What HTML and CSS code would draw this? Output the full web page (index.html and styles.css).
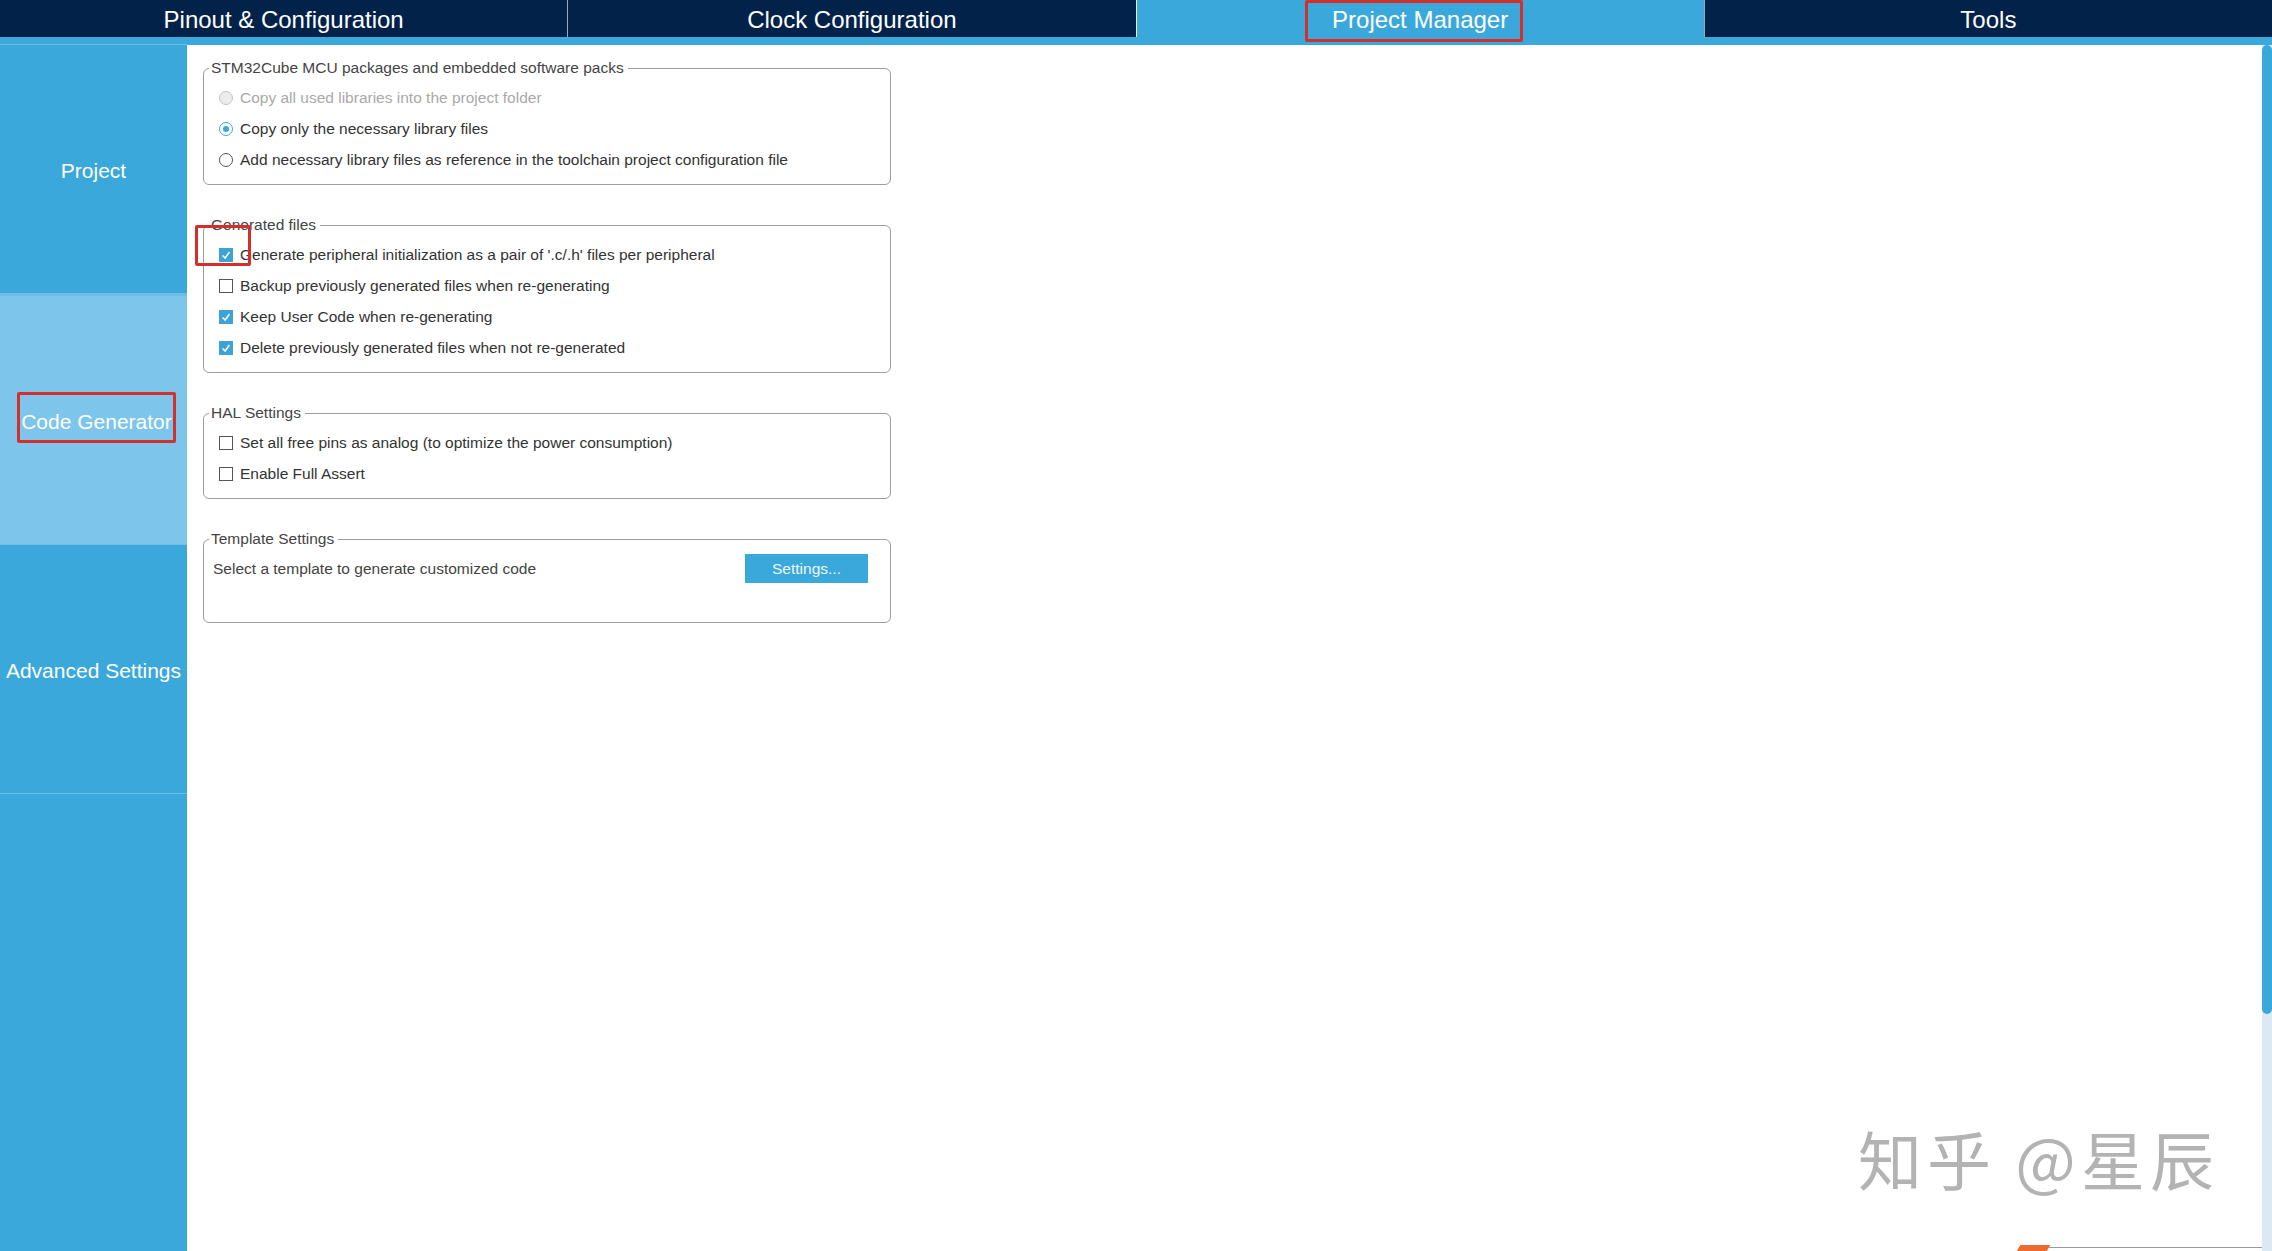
FILE: index.html
```html
<!DOCTYPE html>
<html lang="en">

<head>
    <meta charset="UTF-8">
    <meta name="viewport" content="width=device-width, initial-scale=1.0">
    <title>Project Manager</title>
    <link rel="stylesheet" href="styles.css">
</head>

<body>
    <div class="app">
        <nav class="tabs">
            <div class="tab">Pinout &amp; Configuration</div>
            <div class="tab">Clock Configuration</div>
            <div class="tab active">Project Manager<span class="mark mark-tab"></span></div>
            <div class="tab">Tools</div>
        </nav>
        <div class="strip"></div>

        <div class="workspace">
            <aside class="sidebar">
                <div class="side-item">Project</div>
                <div class="side-item selected"><span class="boxed">Code Generator</span></div>
                <div class="side-item">Advanced Settings</div>
            </aside>

            <main class="main">
                <fieldset class="group">
                    <legend>STM32Cube MCU packages and embedded software packs</legend>
                    <div class="row disabled"><span class="radio"></span>Copy all used libraries into the project folder</div>
                    <div class="row"><span class="radio on"></span>Copy only the necessary library files</div>
                    <div class="row"><span class="radio"></span>Add necessary library files as reference in the toolchain project configuration file</div>
                </fieldset>

                <fieldset class="group">
                    <legend>Generated files</legend>
                    <div class="row"><span class="check on"><svg viewBox="0 0 14 14"><polyline points="3,7.5 6,10.5 11,3.5"/></svg></span>Generate peripheral initialization as a pair of '.c/.h' files per peripheral</div>
                    <div class="row"><span class="check"></span>Backup previously generated files when re-generating</div>
                    <div class="row"><span class="check on"><svg viewBox="0 0 14 14"><polyline points="3,7.5 6,10.5 11,3.5"/></svg></span>Keep User Code when re-generating</div>
                    <div class="row"><span class="check on"><svg viewBox="0 0 14 14"><polyline points="3,7.5 6,10.5 11,3.5"/></svg></span>Delete previously generated files when not re-generated</div>
                </fieldset>

                <fieldset class="group">
                    <legend>HAL Settings</legend>
                    <div class="row"><span class="check"></span>Set all free pins as analog (to optimize the power consumption)</div>
                    <div class="row"><span class="check"></span>Enable Full Assert</div>
                </fieldset>

                <fieldset class="group template">
                    <legend>Template Settings</legend>
                    <div class="row plain">
                        <span>Select a template to generate customized code</span>
                        <button class="btn" type="button">Settings...</button>
                    </div>
                </fieldset>

                <!-- red annotation box from the screenshot -->
                <span class="mark mark-check"></span>

                <div class="watermark">知乎 @星辰</div>
                <span class="corner-orange"></span>
                <span class="corner-line"></span>
            </main>

            <div class="scroll">
                <div class="thumb"></div>
            </div>
        </div>
    </div>
</body>

</html>
```

FILE: styles.css
```css
body {
    margin: 0;
    width: 2272px;
    height: 1251px;
    overflow: hidden;
    font-family: "Liberation Sans", Arial, sans-serif;
    background: #fff;
}

.app {
    display: flex;
    flex-direction: column;
    height: 1251px;
}

/* top tabs */
.tabs {
    display: flex;
    height: 37px;
    background: #03224a;
}

.tab {
    position: relative;
    flex: 1;
    display: flex;
    justify-content: center;
    align-items: center;
    padding-top: 2px;
    box-sizing: border-box;
    color: #fff;
    font-size: 24px;
    border-left: 1px solid #9aa8b8;
}

.tab:first-child {
    border-left: none;
}

.tab.active {
    background: #3aa8db;
    border-left-color: #e6f2fa;
}

.strip {
    height: 8px;
    background: #3aa8db;
}

.workspace {
    flex: 1;
    display: flex;
}

/* left menu */
.sidebar {
    width: 187px;
    background: #3aa8db;
    display: flex;
    flex-direction: column;
}

.side-item {
    height: 249px;
    box-sizing: border-box;
    padding-top: 3px;
    border-bottom: 1px solid #6cbde7;
    display: flex;
    justify-content: center;
    align-items: center;
    color: #fff;
    font-size: 21px;
}

.side-item:first-child {
    box-shadow: 0 -1px 0 #6cbde7;
}

.side-item.selected {
    background: #7dc5ea;
    border-top: 2px solid #6cbde7;
    height: 251px;
    padding-top: 0;
}

.boxed {
    padding: 15px 1px 6px 1px;
    border: 3px solid #d3302c;
    border-radius: 2px;
    margin-left: 6px;
    margin-top: -5px;
}

/* content */
.main {
    position: relative;
    flex: 1;
    padding: 14px 0 0 16px;
}

.group {
    width: 688px;
    box-sizing: border-box;
    margin: 0 0 31px;
    padding: 5px 22px 9px 5px;
    border: 1px solid #9d9d9d;
    border-radius: 6px;
    font-size: 15.5px;
}

.group legend {
    padding: 0 4px 0 2px;
    color: #444;
}

.row {
    display: flex;
    align-items: center;
    height: 31px;
    padding-left: 10px;
    color: #333;
    white-space: nowrap;
}

.row.disabled {
    color: #a9a9a9;
}

.row.plain {
    justify-content: space-between;
    padding-left: 4px;
    color: #444;
}

.template {
    padding-bottom: 38px;
}

.radio,
.check {
    width: 14px;
    height: 14px;
    box-sizing: border-box;
    margin-right: 7px;
    flex: none;
    border: 1px solid #555;
    background: #fff;
}

.radio {
    border-radius: 50%;
    display: flex;
    justify-content: center;
    align-items: center;
}

.disabled .radio {
    border-color: #c4c4c4;
    background: #ececec;
}

.radio.on {
    border: 1.5px solid #3aa8db;
}

.radio.on::after {
    content: "";
    width: 6px;
    height: 6px;
    border-radius: 50%;
    background: #3aa8db;
}

.check.on {
    border-color: #3ba3d8;
    background: #3ba3d8;
}

.check svg {
    display: block;
    width: 12px;
    height: 12px;
    fill: none;
    stroke: #fff;
    stroke-width: 1.8;
}

.btn {
    width: 123px;
    height: 29px;
    border: none;
    background: #3aa8db;
    color: #eef7fc;
    font-family: inherit;
    font-size: 15.5px;
}

/* annotation boxes */
.mark {
    position: absolute;
    border: 3px solid #d3302c;
    border-radius: 2px;
    box-sizing: border-box;
}

.mark-tab {
    left: 168px;
    top: 0;
    width: 218px;
    height: 42px;
}

.mark-check {
    left: 8px;
    top: 180px;
    width: 56px;
    height: 41px;
}

.watermark {
    position: absolute;
    left: 1671px;
    top: 1080px;
    font-family: "Noto Sans CJK SC", sans-serif;
    font-size: 64px;
    line-height: 1;
    letter-spacing: 5px;
    color: #b3b3b3;
    white-space: nowrap;
}

.corner-orange {
    position: absolute;
    left: 1831px;
    top: 1200px;
    width: 30px;
    height: 8px;
    background: #ee6a2e;
    transform: skewX(-30deg);
}

.corner-line {
    position: absolute;
    left: 1861px;
    top: 1202px;
    width: 214px;
    height: 1px;
    background: #9a9a9a;
}

/* scrollbar */
.scroll {
    width: 10px;
    background: #dbe9f5;
}

.thumb {
    height: 969px;
    background: #3aa8db;
    border-radius: 5px;
}
```
